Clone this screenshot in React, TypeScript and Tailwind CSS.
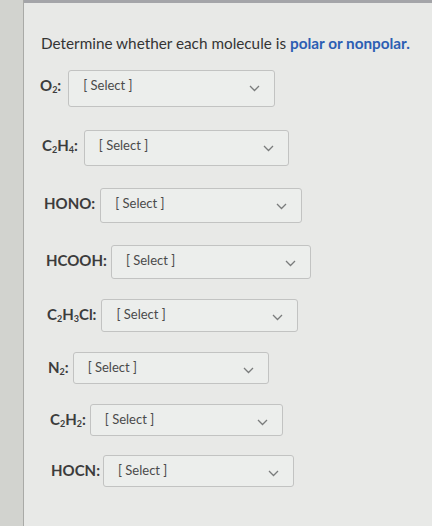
import { ReactNode } from 'react'

type Row = {
  label: ReactNode
  rowClass: string
  boxClass: string
}

function Sub({ children }: { children: ReactNode }) {
  return <sub className="relative top-[2px] text-[9px] leading-none">{children}</sub>
}

const rows: Row[] = [
  { label: <>O<Sub>2</Sub>:</>, rowClass: 'mt-[17px] pl-[16px] gap-[7px]', boxClass: 'w-[207px] h-[37px]' },
  { label: <>C<Sub>2</Sub>H<Sub>4</Sub>:</>, rowClass: 'mt-[23px] pl-[18px] gap-[6px]', boxClass: 'w-[205px] h-[36px]' },
  { label: 'HONO:', rowClass: 'mt-[22px] pl-[20px] gap-[5px]', boxClass: 'w-[202px] h-[35px]' },
  { label: 'HCOOH:', rowClass: 'mt-[22px] pl-[22px] gap-[4px]', boxClass: 'w-[200px] h-[34px]' },
  { label: <>C<Sub>2</Sub>H<Sub>3</Sub>Cl:</>, rowClass: 'mt-[20px] pl-[23px] gap-[5px]', boxClass: 'w-[197px] h-[33px]' },
  { label: <>N<Sub>2</Sub>:</>, rowClass: 'mt-[20px] pl-[24px] gap-[4px]', boxClass: 'w-[196px] h-[32px]' },
  { label: <>C<Sub>2</Sub>H<Sub>2</Sub>:</>, rowClass: 'mt-[20px] pl-[26px] gap-[4px]', boxClass: 'w-[193px] h-[32px]' },
  { label: 'HOCN:', rowClass: 'mt-[19px] pl-[27px] gap-[3px]', boxClass: 'w-[191px] h-[32px]' },
]

function Chevron() {
  return (
    <svg width="11" height="7" viewBox="0 0 11 7" fill="none" className="mt-[8px]">
      <path d="M1 1l4.5 4.5L10 1" stroke="#7a7c7c" strokeWidth="1.3" />
    </svg>
  )
}

export default function App() {
  return (
    <div className="flex h-[526px] w-[432px] overflow-hidden bg-[#d3d4d0] font-['Lato',sans-serif]">
      <div className="w-[24px] shrink-0 border-r border-[#a9aaa7] bg-[#d2d3cf]" />
      <div className="flex-1 border-t-[3px] border-[#a4a5a9] bg-[#e8e9e7]">
        <p className="pl-[17px] pt-[30px] text-[15.3px] leading-[20px] text-[#343434]">
          Determine whether each molecule is{' '}
          <span className="font-bold text-[#2c5eb3]">polar or nonpolar.</span>
        </p>
        <div className="flex flex-col">
          {rows.map((row, i) => (
            <div key={i} className={`flex items-start ${row.rowClass}`}>
              <span className="pt-[7px] text-[15px] font-bold leading-[16px] text-[#3c3c3c]">{row.label}</span>
              <div
                className={`flex items-start justify-between rounded-[3px] border border-[#c2c3c2] bg-[#eceeec] pl-[14px] pr-[14px] pt-[6px] ${row.boxClass}`}
              >
                <span className="text-[13px] leading-[16px] text-[#4a4a4a]">[ Select ]</span>
                <Chevron />
              </div>
            </div>
          ))}
        </div>
      </div>
    </div>
  )
}
